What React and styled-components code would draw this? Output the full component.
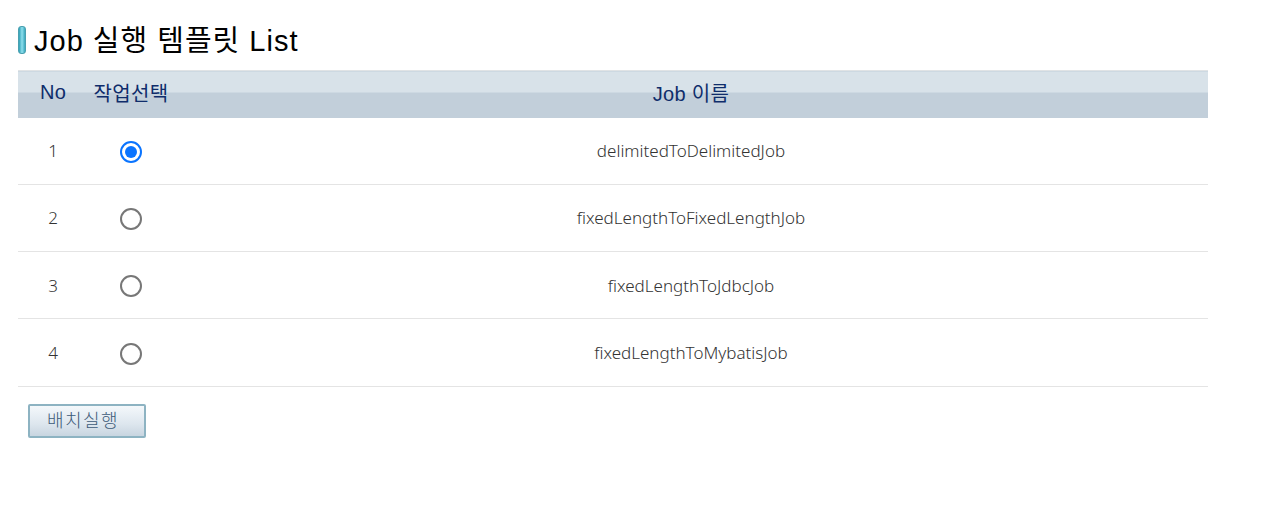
import React, { useState } from 'react'
import styled, { createGlobalStyle } from 'styled-components';

const GlobalStyle = createGlobalStyle`
body {
    margin: 0;
    background: #fff;
    font-family: "Noto Sans", "Noto Sans CJK KR", sans-serif;
}
`;

const Page = styled.div`
padding: 20px 54px 40px 18px;
`;

const TitleRow = styled.h2`
display: flex;
align-items: center;
gap: 8px;
margin: 0 0 14px 0;
font-family: "Liberation Sans", "Noto Sans CJK KR", sans-serif;
font-size: 29px;
font-weight: normal;
letter-spacing: 1px;
color: #000;
height: 36px;
`;

const TitleMark = styled.span`
display: inline-block;
width: 8px;
height: 28px;
margin-top: 3px;
border-radius: 3px;
background: linear-gradient(to right, #2f9fb5, #8fe0ee 50%, #3aa8bd);
border: 1px solid #4aa0b0;
box-sizing: border-box;
`;

const Table = styled.table`
width: 1190px;
border-collapse: collapse;
border-top: 1px solid #e0e3e5;
`;

const HeadCell = styled.th`
height: 47px;
padding: 0 0 3px 0;
box-sizing: border-box;
font-family: "Liberation Sans", "Noto Sans CJK KR", sans-serif;
font-size: 20px;
font-weight: normal;
letter-spacing: 0.3px;
color: #0f2d6b;
background: linear-gradient(to bottom, #d8e2e9 0, #d8e2e9 21px, #c2cfda 21px, #c2cfda 100%);
width: ${p => p.$w || 'auto'};
`;

const Row = styled.tr`
border-bottom: 1px solid #e4e4e4;
`;

const Cell = styled.td`
height: 66.3px;
padding: 0;
text-align: center;
font-size: 17px;
font-weight: 300;
color: #333;
`;

const Radio = styled.span`
display: inline-block;
width: 22px;
height: 22px;
border-radius: 50%;
box-sizing: border-box;
border: 2px solid ${p => (p.$on ? '#0a74ff' : '#777')};
vertical-align: middle;
position: relative;
cursor: pointer;
&::after {
    content: '';
    display: ${p => (p.$on ? 'block' : 'none')};
    position: absolute;
    left: 3px;
    top: 3px;
    width: 12px;
    height: 12px;
    border-radius: 50%;
    background: #0a74ff;
}
`;

const Buttons = styled.div`
padding: 17px 0 0 10px;
`;

const RunButton = styled.button`
width: 118px;
height: 34px;
border: 2px solid #8db3c2;
border-radius: 2px;
background: linear-gradient(to bottom, #f4f8fb, #dde6ee 60%, #c8d5e0);
color: #3c5a78;
font-family: "Noto Sans CJK KR", sans-serif;
font-size: 18px;
font-weight: 300;
letter-spacing: 1.5px;
padding: 0 8px 3px 0;
cursor: pointer;
`;

const jobs = [
    'delimitedToDelimitedJob',
    'fixedLengthToFixedLengthJob',
    'fixedLengthToJdbcJob',
    'fixedLengthToMybatisJob',
];

const App = () => {
    const [sel, setSel] = useState(0);
    return (
        <>
            <GlobalStyle />
            <Page>
                <TitleRow>
                    <TitleMark />
                    Job 실행 템플릿 List
                </TitleRow>
                <Table>
                    <thead>
                        <tr>
                            <HeadCell $w="70px">No</HeadCell>
                            <HeadCell $w="86px">작업선택</HeadCell>
                            <HeadCell>Job 이름</HeadCell>
                        </tr>
                    </thead>
                    <tbody>
                        {jobs.map((job, i) => (
                            <Row key={job}>
                                <Cell>{i + 1}</Cell>
                                <Cell>
                                    <Radio $on={sel === i} onClick={() => setSel(i)} />
                                </Cell>
                                <Cell>{job}</Cell>
                            </Row>
                        ))}
                    </tbody>
                </Table>
                <Buttons>
                    <RunButton>배치실행</RunButton>
                </Buttons>
            </Page>
        </>
    )
}

export default App
